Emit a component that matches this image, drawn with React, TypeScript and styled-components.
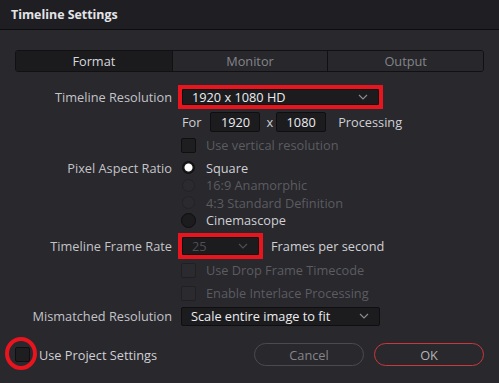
import styled, { createGlobalStyle } from "styled-components";

const GlobalStyle = createGlobalStyle`
	html, body {
		margin: 0;
		padding: 0;
		background: #28282d;
	}

	body {
		font-family: "Open Sans", "Noto Sans", sans-serif;
		font-size: 12.75px;
		color: #c4c4c8;
	}
`;

const Dialog = styled.div`
	width: 499px;
	height: 383px;
	background: #28282d;
	overflow: hidden;
	position: relative;
`;

const TitleBar = styled.header`
	height: 29px;
	display: flex;
	align-items: center;
	padding-left: 11px;
	background: #1f1f23;
	border-bottom: 1px solid #0e0e10;
	font-weight: 700;
	font-size: 12.4px;
	color: #e4e4e8;
`;

const Body = styled.div`
	padding: 0 15px;
	display: flex;
	flex-direction: column;
`;

const Tabs = styled.div`
	margin-top: 20px;
	height: 22px;
	display: grid;
	grid-template-columns: 1fr 1fr 1fr;
	border: 1px solid #111113;
	border-radius: 3px;
	box-sizing: border-box;
	overflow: hidden;
`;

const Tab = styled.div<{ $active?: boolean }>`
	display: flex;
	align-items: center;
	justify-content: center;
	background: ${(p) => (p.$active ? "#1b1b1e" : "#27272c")};
	color: ${(p) => (p.$active ? "#d8d8dc" : "#85858a")};
	& + & {
		border-left: 1px solid #111113;
	}
`;

const Row = styled.div<{ $h: number; $mt: number }>`
	display: flex;
	align-items: center;
	height: ${(p) => p.$h}px;
	margin-top: ${(p) => p.$mt}px;
`;

const Label = styled.div`
	width: 157px;
	margin-right: 6px;
	text-align: right;
	white-space: nowrap;
	color: #c4c4c8;
	flex-shrink: 0;
`;

const Highlight = styled.div`
	border: 4px solid #e8141e;
	display: flex;
`;

const Select = styled.div<{ $w: number; $h: number; $disabled?: boolean; $ml?: number }>`
	width: ${(p) => p.$w}px;
	height: ${(p) => p.$h}px;
	margin-left: ${(p) => p.$ml ?? 0}px;
	box-sizing: border-box;
	display: flex;
	align-items: center;
	justify-content: space-between;
	padding: 0 10px 0 9px;
	background: #1c1c1f;
	border: 1px solid #0f0f11;
	border-radius: 2px;
	color: ${(p) => (p.$disabled ? "#4e4e53" : "#ececf0")};
	white-space: nowrap;
`;

const Text = styled.span<{ $dim?: boolean; $ml?: number }>`
	margin-left: ${(p) => p.$ml ?? 0}px;
	color: ${(p) => (p.$dim ? "#5c5c61" : "#d0d0d4")};
	white-space: nowrap;
`;

const NumberBox = styled.div<{ $ml: number }>`
	width: 50px;
	height: 20px;
	margin-left: ${(p) => p.$ml}px;
	box-sizing: border-box;
	display: flex;
	align-items: center;
	justify-content: center;
	background: #1c1c1f;
	border: 1px solid #0f0f11;
	border-radius: 2px;
	color: #ececf0;
`;

const Check = styled.div<{ $disabled?: boolean; $ml?: number }>`
	width: 15px;
	height: 15px;
	margin-left: ${(p) => p.$ml ?? 0}px;
	box-sizing: border-box;
	background: ${(p) => (p.$disabled ? "#2a2a2f" : "#1e1e21")};
	border: 1px solid ${(p) => (p.$disabled ? "#202024" : "#0f0f11")};
	border-radius: 2px;
	flex-shrink: 0;
`;

const Radio = styled.div<{ $state: "on" | "off" | "disabled" }>`
	width: ${(p) => (p.$state === "off" ? 15 : 13)}px;
	height: ${(p) => (p.$state === "off" ? 15 : 13)}px;
	margin-left: ${(p) => (p.$state === "off" ? 3 : 4)}px;
	margin-right: ${(p) => (p.$state === "off" ? 10 : 11)}px;
	box-sizing: border-box;
	border-radius: 50%;
	flex-shrink: 0;
	background: ${(p) =>
		p.$state === "on"
			? "radial-gradient(circle, #ffffff 0 3.5px, #18181a 4.5px)"
			: p.$state === "off"
			? "#1c1c1e"
			: "#2a2a2f"};
	border: 1px solid ${(p) => (p.$state === "disabled" ? "#232327" : "#0d0d0f")};
`;

const RadioGroup = styled.div`
	display: flex;
	flex-direction: column;
	margin-top: 5px;
`;

const RadioRow = styled.div`
	display: flex;
	align-items: center;
	height: 17.5px;
`;

const Footer = styled.div`
	display: flex;
	align-items: center;
	height: 23px;
	margin-top: 17px;
	position: relative;
`;

const CircleMark = styled.div`
	position: absolute;
	left: -10px;
	top: -6px;
	width: 32px;
	height: 33px;
	box-sizing: border-box;
	border: 4px solid #e8141e;
	border-radius: 50%;
`;

const Buttons = styled.div`
	margin-left: auto;
	display: flex;
	gap: 10px;
`;

const Button = styled.button<{ $primary?: boolean }>`
	width: 110px;
	height: 23px;
	border-radius: 12px;
	background: transparent;
	border: 1px solid ${(p) => (p.$primary ? "#c9393b" : "#4a4a4f")};
	color: ${(p) => (p.$primary ? "#b4b4b8" : "#85858a")};
	font-family: inherit;
	font-size: 12.75px;
	padding: 0;
`;

const Chevron = ({ color }: { color: string }) => (
	<svg width="10" height="6" viewBox="0 0 10 6">
		<path d="M1 1 L5 5 L9 1" fill="none" stroke={color} strokeWidth="1.2" />
	</svg>
);

const aspectOptions: { label: string; state: "on" | "off" | "disabled" }[] = [
	{ label: "Square", state: "on" },
	{ label: "16:9 Anamorphic", state: "disabled" },
	{ label: "4:3 Standard Definition", state: "disabled" },
	{ label: "Cinemascope", state: "off" },
];

export default function App() {
	return (
		<Dialog>
			<GlobalStyle />
			<TitleBar>Timeline Settings</TitleBar>
			<Body>
				<Tabs>
					<Tab $active>Format</Tab>
					<Tab>Monitor</Tab>
					<Tab>Output</Tab>
				</Tabs>

				<Row $h={24} $mt={13}>
					<Label>Timeline Resolution</Label>
					<Highlight>
						<Select $w={197} $h={16}>
							1920 x 1080 HD
							<Chevron color="#8a8a8f" />
						</Select>
					</Highlight>
				</Row>

				<Row $h={22} $mt={2}>
					<Text $ml={167}>For</Text>
					<NumberBox $ml={9}>1920</NumberBox>
					<Text $ml={6}>x</Text>
					<NumberBox $ml={3}>1080</NumberBox>
					<Text $ml={12}>Processing</Text>
				</Row>

				<Row $h={18} $mt={3}>
					<Check $ml={166} />
					<Text $dim $ml={10}>Use vertical resolution</Text>
				</Row>

				<RadioGroup>
					{aspectOptions.map((o, i) => (
						<RadioRow key={o.label}>
							<Label>{i === 0 ? "Pixel Aspect Ratio" : ""}</Label>
							<Radio $state={o.state} />
							<Text $dim={o.state === "disabled"}>{o.label}</Text>
						</RadioRow>
					))}
				</RadioGroup>

				<Row $h={26} $mt={4}>
					<Label>Timeline Frame Rate</Label>
					<Highlight>
						<Select $w={77} $h={18} $disabled>
							25
							<Chevron color="#4e4e53" />
						</Select>
					</Highlight>
					<Text $ml={8}>Frames per second</Text>
				</Row>

				<Row $h={18} $mt={2}>
					<Check $ml={166} $disabled />
					<Text $dim $ml={10}>Use Drop Frame Timecode</Text>
				</Row>

				<Row $h={18} $mt={5}>
					<Check $ml={166} $disabled />
					<Text $dim $ml={10}>Enable Interlace Processing</Text>
				</Row>

				<Row $h={20} $mt={4}>
					<Label>Mismatched Resolution</Label>
					<Select $w={199} $h={19} $ml={3}>
						Scale entire image to fit
						<Chevron color="#8a8a8f" />
					</Select>
				</Row>

				<Footer>
					<CircleMark />
					<Check />
					<Text $ml={9}>Use Project Settings</Text>
					<Buttons>
						<Button>Cancel</Button>
						<Button $primary>OK</Button>
					</Buttons>
				</Footer>
			</Body>
		</Dialog>
	);
}
